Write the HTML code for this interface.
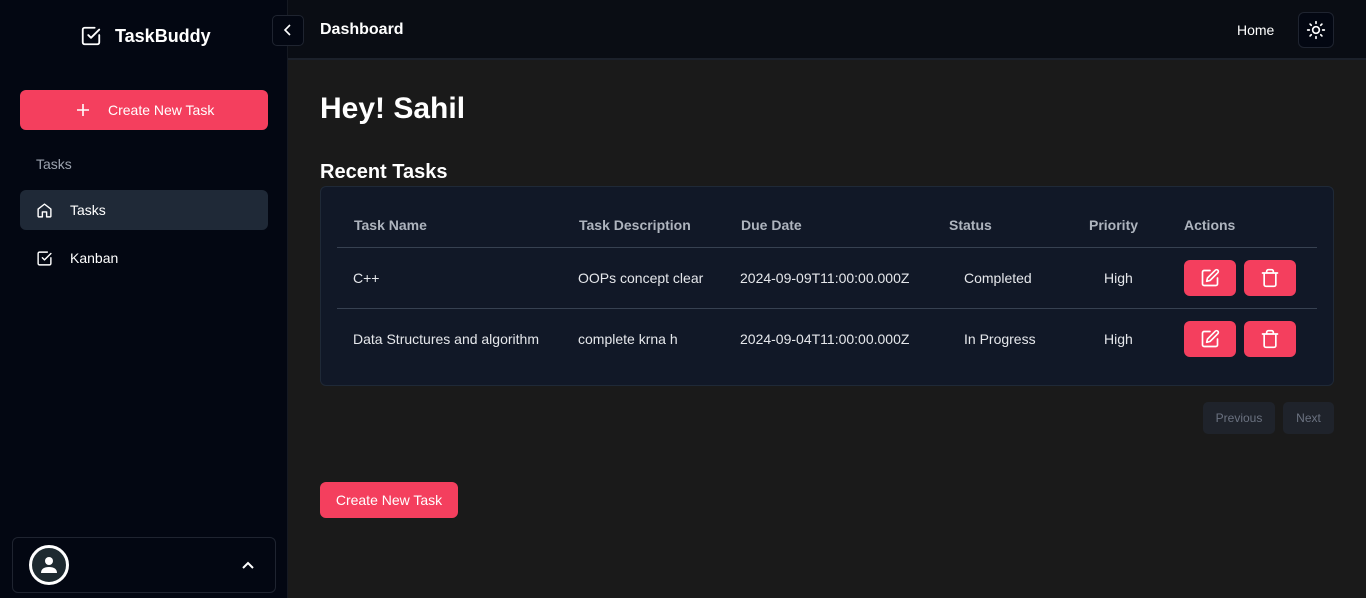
<!DOCTYPE html>
<html><head><style>
*{box-sizing:border-box;margin:0;padding:0}
body{width:1366px;height:598px;overflow:hidden;background:#1a1a1a;font-family:"Liberation Sans",sans-serif;color:#fff;position:relative}
.a{position:absolute}
.sb{left:0;top:0;width:288px;height:598px;background:#030712;border-right:1px solid #151922}
.hd{left:288px;top:0;width:1078px;height:60px;background:#0a0d14;border-bottom:2px solid #1c212b}
.btn{background:#f43f5e;border-radius:6px}
.th{top:217px;font-size:14px;font-weight:bold;color:#aeb4be}
.td{font-size:14px;color:#e5e7eb}
.ib{width:52px;height:36px;display:flex;align-items:center;justify-content:center}
</style></head><body>
<div class="a sb"></div>
<svg class="a" style="left:80px;top:25px" width="22" height="22" viewBox="0 0 24 24" fill="none" stroke="#fff" stroke-width="2" stroke-linecap="round" stroke-linejoin="round"><path d="M21 11v8a2 2 0 0 1-2 2H5a2 2 0 0 1-2-2V5a2 2 0 0 1 2-2h11"/><path d="M9 11l3 3 9-9"/></svg>
<div class="a" style="left:115px;top:26px;font-size:18px;font-weight:bold">TaskBuddy</div>
<div class="a btn" style="left:20px;top:90px;width:248px;height:40px"></div>
<svg class="a" style="left:76px;top:103px" width="14" height="14" viewBox="0 0 14 14" stroke="#fff" stroke-width="1.6"><path d="M7 1v12M1 7h12"/></svg>
<div class="a" style="left:108px;top:102px;font-size:14px">Create New Task</div>
<div class="a" style="left:36px;top:156px;font-size:14px;color:#9ca3af">Tasks</div>
<div class="a" style="left:20px;top:190px;width:248px;height:40px;background:#1f2937;border-radius:6px"></div>
<svg class="a" style="left:36px;top:202px" width="17" height="17" viewBox="0 0 24 24" fill="none" stroke="#fff" stroke-width="2" stroke-linejoin="round"><path d="M3 10l9-7 9 7v10a1 1 0 0 1-1 1h-5v-7H9v7H4a1 1 0 0 1-1-1z"/></svg>
<div class="a" style="left:70px;top:202px;font-size:14px">Tasks</div>
<svg class="a" style="left:36px;top:250px" width="17" height="17" viewBox="0 0 24 24" fill="none" stroke="#fff" stroke-width="2" stroke-linecap="round" stroke-linejoin="round"><path d="M21 11v8a2 2 0 0 1-2 2H5a2 2 0 0 1-2-2V5a2 2 0 0 1 2-2h11"/><path d="M9 11l3 3 9-9"/></svg>
<div class="a" style="left:70px;top:250px;font-size:14px">Kanban</div>
<div class="a" style="left:12px;top:537px;width:264px;height:56px;border:1px solid #1f2430;border-radius:6px"></div>
<div class="a" style="left:29px;top:545px;width:40px;height:40px;border-radius:50%;border:3px solid #fff;background:#1e2a30"></div>
<svg class="a" style="left:38px;top:554px" width="22" height="22" viewBox="0 0 22 22" fill="#fff"><circle cx="11" cy="7" r="4"/><path d="M3 19c0-4 3-6 8-6s8 2 8 6z"/></svg>
<svg class="a" style="left:241px;top:560px" width="14" height="10" viewBox="0 0 14 10" fill="none" stroke="#fff" stroke-width="2"><path d="M2 8l5-5 5 5"/></svg>
<div class="a hd"></div>
<div class="a" style="left:272px;top:15px;width:32px;height:31px;background:#030712;border:1px solid #1f2430;border-radius:5px"></div>
<svg class="a" style="left:283px;top:24px" width="10" height="12" viewBox="0 0 10 12" fill="none" stroke="#fff" stroke-width="1.6"><path d="M7 1L2 6l5 5"/></svg>
<div class="a" style="left:320px;top:21px;font-size:16px;font-weight:bold">Dashboard</div>
<div class="a" style="left:1237px;top:22px;font-size:14px">Home</div>
<div class="a" style="left:1298px;top:12px;width:36px;height:36px;background:#030712;border:1px solid #1f2430;border-radius:6px"></div>
<svg class="a" style="left:1306px;top:20px" width="20" height="20" viewBox="0 0 24 24" fill="none" stroke="#fff" stroke-width="2" stroke-linecap="round"><circle cx="12" cy="12" r="4"/><path d="M12 2v2M12 20v2M4.9 4.9l1.4 1.4M17.7 17.7l1.4 1.4M2 12h2M20 12h2M4.9 19.1l1.4-1.4M17.7 6.3l1.4-1.4"/></svg>
<div class="a" style="left:320px;top:92px;font-size:30px;font-weight:bold">Hey! Sahil</div>
<div class="a" style="left:320px;top:161px;font-size:20px;font-weight:bold">Recent Tasks</div>
<div class="a" style="left:320px;top:186px;width:1014px;height:200px;background:#111827;border:1px solid #1f2937;border-radius:6px"></div>
<div class="a" style="left:337px;top:247px;width:980px;height:1px;background:#374151"></div>
<div class="a" style="left:337px;top:308px;width:980px;height:1px;background:#374151"></div>
<div class="a th" style="left:354px">Task Name</div>
<div class="a th" style="left:579px">Task Description</div>
<div class="a th" style="left:741px">Due Date</div>
<div class="a th" style="left:949px">Status</div>
<div class="a th" style="left:1089px">Priority</div>
<div class="a th" style="left:1184px">Actions</div>
<div class="a td" style="left:353px;top:270px">C++</div>
<div class="a td" style="left:578px;top:270px">OOPs concept clear</div>
<div class="a td" style="left:740px;top:270px">2024-09-09T11:00:00.000Z</div>
<div class="a td" style="left:964px;top:270px">Completed</div>
<div class="a td" style="left:1104px;top:270px">High</div>
<div class="a td" style="left:353px;top:331px">Data Structures and algorithm</div>
<div class="a td" style="left:578px;top:331px">complete krna h</div>
<div class="a td" style="left:740px;top:331px">2024-09-04T11:00:00.000Z</div>
<div class="a td" style="left:964px;top:331px">In Progress</div>
<div class="a td" style="left:1104px;top:331px">High</div>
<div class="a btn ib" style="left:1184px;top:260px"><svg width="20" height="20" viewBox="0 0 24 24" fill="none" stroke="#fff" stroke-width="2" stroke-linecap="round" stroke-linejoin="round"><path d="M12 3H5a2 2 0 0 0-2 2v14a2 2 0 0 0 2 2h14a2 2 0 0 0 2-2v-7"/><path d="M18.4 2.6a2.1 2.1 0 1 1 3 3L12 15l-4 1 1-4z"/></svg></div>
<div class="a btn ib" style="left:1244px;top:260px"><svg width="20" height="20" viewBox="0 0 24 24" fill="none" stroke="#fff" stroke-width="2" stroke-linecap="round" stroke-linejoin="round"><path d="M3 6h18M19 6v14a2 2 0 0 1-2 2H7a2 2 0 0 1-2-2V6M8 6V4a2 2 0 0 1 2-2h4a2 2 0 0 1 2 2v2"/></svg></div>
<div class="a btn ib" style="left:1184px;top:321px"><svg width="20" height="20" viewBox="0 0 24 24" fill="none" stroke="#fff" stroke-width="2" stroke-linecap="round" stroke-linejoin="round"><path d="M12 3H5a2 2 0 0 0-2 2v14a2 2 0 0 0 2 2h14a2 2 0 0 0 2-2v-7"/><path d="M18.4 2.6a2.1 2.1 0 1 1 3 3L12 15l-4 1 1-4z"/></svg></div>
<div class="a btn ib" style="left:1244px;top:321px"><svg width="20" height="20" viewBox="0 0 24 24" fill="none" stroke="#fff" stroke-width="2" stroke-linecap="round" stroke-linejoin="round"><path d="M3 6h18M19 6v14a2 2 0 0 1-2 2H7a2 2 0 0 1-2-2V6M8 6V4a2 2 0 0 1 2-2h4a2 2 0 0 1 2 2v2"/></svg></div>
<div class="a" style="left:1203px;top:402px;width:72px;height:32px;background:#1f232b;border-radius:5px;font-size:12px;color:#6b7280;text-align:center;line-height:32px">Previous</div>
<div class="a" style="left:1283px;top:402px;width:51px;height:32px;background:#1f232b;border-radius:5px;font-size:12px;color:#6b7280;text-align:center;line-height:32px">Next</div>
<div class="a btn" style="left:320px;top:482px;width:138px;height:36px;font-size:14px;text-align:center;line-height:36px">Create New Task</div>
</body></html>
